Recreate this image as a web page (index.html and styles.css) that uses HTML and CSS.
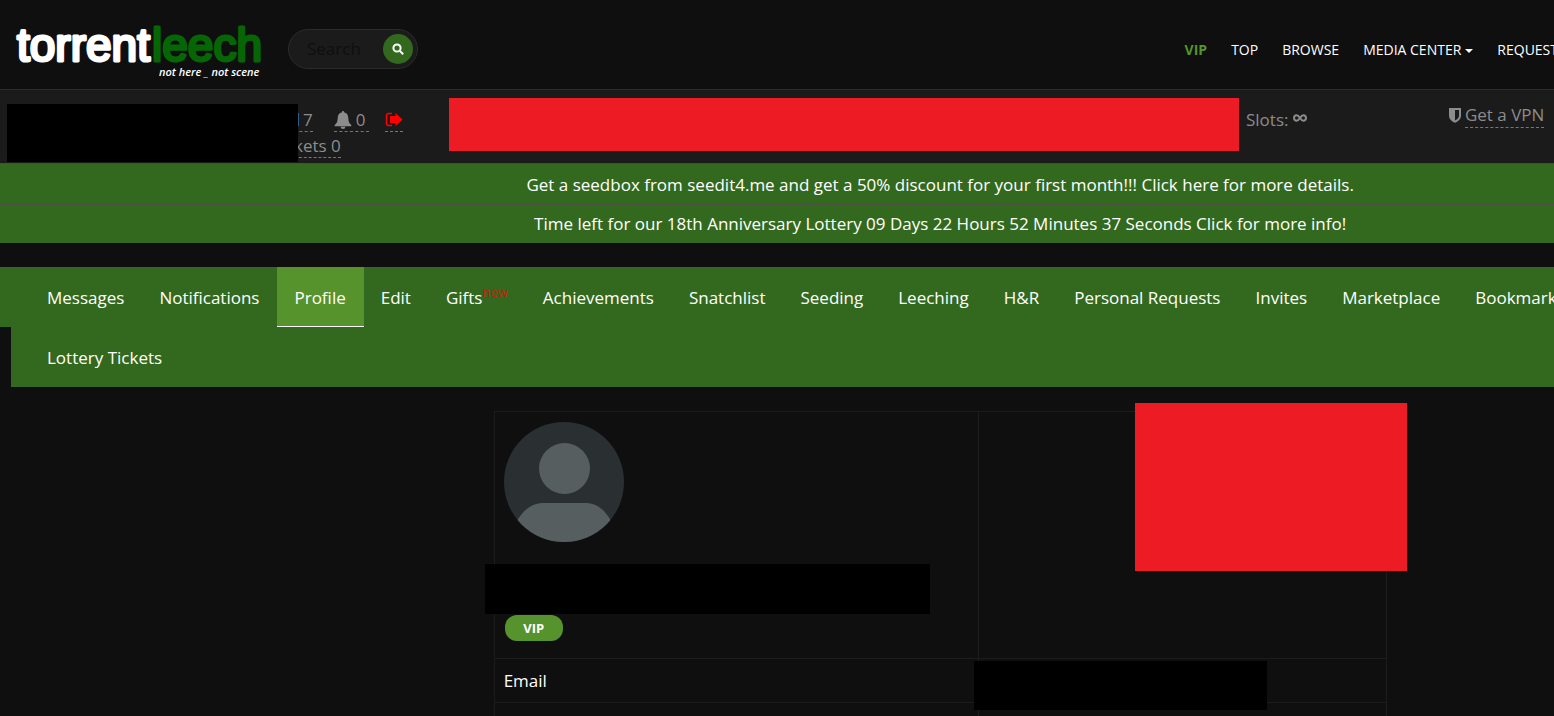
FILE: index.html
```html
<!DOCTYPE html>
<html lang="en">
<head>
    <meta charset="UTF-8">
    <meta name="viewport" content="width=device-width, initial-scale=1.0">
    <title>TorrentLeech - Profile</title>
    <link rel="stylesheet" href="styles.css">
</head>
<body>
    <div class="page">
        <header class="header">
            <div class="header-left">
                <a class="logo" href="#" aria-label="torrentleech">
                    <svg width="252" height="64" viewBox="0 0 252 64">
                        <g class="logo-name">
                            <text class="logo-white" x="3" y="44">torrent</text>
                            <text class="logo-green" x="138" y="44">leech</text>
                        </g>
                        <text class="logo-tagline" x="145" y="59">not here _ not scene</text>
                    </svg>
                </a>
                <form class="search">
                    <input type="text" placeholder="Search" aria-label="Search">
                    <button type="button" aria-label="Search">
                        <svg width="12" height="12" viewBox="0 0 12 12" fill="none" stroke="#fff" stroke-width="2">
                            <circle cx="5" cy="5" r="3.6"/>
                            <path d="M7.6 7.6 11.2 11.2"/>
                        </svg>
                    </button>
                </form>
            </div>
            <nav class="main-nav">
                <a class="vip" href="#">VIP</a>
                <a href="#">TOP</a>
                <a href="#">BROWSE</a>
                <a href="#">MEDIA CENTER<span class="caret"></span></a>
                <a href="#">REQUESTS</a>
            </nav>
        </header>

        <section class="user-bar">
            <div class="user-info">
                <div class="mask mask-user"></div>
                <div class="user-links">
                    <div class="user-row">
                        <a class="inbox" href="#"><span class="inbox-icon"></span>7</a>
                        <a class="bell" href="#">
                            <svg width="18" height="18" viewBox="0 0 18 18" fill="currentColor">
                                <path d="M9 0C8.300 0 7.900.5 8 1.300 5 1.900 3.800 4.300 3.700 7 3.600 10.800 2.600 12.600.7 14v1.300h16.600V14c-1.900-1.400-2.900-3.200-3-7C14.200 4.300 13 1.900 10 1.300 10.100.5 9.700 0 9 0zM6.600 15.800a2.400 2.200 0 0 0 4.800 0z"/>
                            </svg>0</a>
                        <a class="logout" href="#" aria-label="Logout">
                            <svg width="18" height="16" viewBox="0 0 18 16">
                                <path d="M7 1.500H3.500a2 2 0 0 0-2 2v8a2 2 0 0 0 2 2H7" fill="none" stroke="#f00" stroke-width="1.500"/>
                                <path d="M10.500 1 17.500 7.500 10.500 14V11H5V4h5.500z" fill="#f00"/>
                            </svg>
                        </a>
                    </div>
                    <div class="user-row">
                        <a href="#">kets 0</a>
                    </div>
                </div>
            </div>
            <div class="mask mask-stats"></div>
            <div class="slots">Slots:
                <svg width="14" height="8" viewBox="0 0 14 8" fill="none" stroke="currentColor" stroke-width="2">
                    <path d="M7 4C5.800 2.200 4.800 1.200 3.600 1.200a2.600 2.800 0 0 0 0 5.600C4.800 6.800 5.800 5.800 7 4S9.200 1.200 10.400 1.200a2.600 2.800 0 0 1 0 5.600C9.200 6.800 8.200 5.800 7 4z"/>
                </svg>
            </div>
            <div class="vpn">
                <svg width="12" height="15" viewBox="0 0 12 15" fill="currentColor" fill-rule="evenodd">
                    <path d="M0 0h12v7.500c0 3.500-2.500 5.700-6 7.300C2.500 13.200 0 11 0 7.500zM6 2v10.600c2.400-1.300 4-2.800 4-5.100V2z"/>
                </svg>
                <a href="#">Get a VPN</a>
            </div>
        </section>

        <a class="banner" href="#">Get a seedbox from seedit4.me and get a 50% discount for your first month!!! Click here for more details.</a>
        <a class="banner" href="#">Time left for our 18th Anniversary Lottery 09 Days 22 Hours 52 Minutes 37 Seconds Click for more info!</a>

        <nav class="profile-nav">
            <div class="nav-row">
                <a href="#">Messages</a>
                <a href="#">Notifications</a>
                <a class="active" href="#">Profile</a>
                <a href="#">Edit</a>
                <a href="#">Gifts<sup>new</sup></a>
                <a href="#">Achievements</a>
                <a href="#">Snatchlist</a>
                <a href="#">Seeding</a>
                <a href="#">Leeching</a>
                <a href="#">H&amp;R</a>
                <a href="#">Personal Requests</a>
                <a href="#">Invites</a>
                <a href="#">Marketplace</a>
                <a href="#">Bookmarks</a>
            </div>
            <div class="nav-row nav-row-second">
                <a href="#">Lottery Tickets</a>
            </div>
        </nav>

        <main>
            <table class="profile-table">
                <tr class="profile-top">
                    <td class="label-col">
                        <svg class="avatar" width="120" height="120" viewBox="0 0 120 120">
                            <clipPath id="round"><circle cx="60" cy="60" r="60"/></clipPath>
                            <g clip-path="url(#round)">
                                <rect width="120" height="120" fill="#2a3032"/>
                                <circle cx="60.500" cy="46.500" r="25.500" fill="#575e60"/>
                                <path d="M40 81h41c12 0 20 7 26 18v21H13V99c6-11 15-18 27-18z" fill="#575e60"/>
                            </g>
                        </svg>
                        <div class="mask mask-name"></div>
                        <span class="badge">VIP</span>
                    </td>
                    <td><div class="mask mask-card"></div></td>
                </tr>
                <tr>
                    <td>Email</td>
                    <td><div class="mask mask-email"></div></td>
                </tr>
                <tr>
                    <td></td>
                    <td></td>
                </tr>
            </table>
        </main>
    </div>
</body>
</html>
```

FILE: styles.css
```css
* {
    margin: 0;
    padding: 0;
    box-sizing: border-box;
}

body {
    height: 100vh;
    overflow: hidden;
    background-color: #0f0f0f;
    color: #fff;
    font-family: "Open Sans", "Noto Sans", sans-serif;
    font-size: 17px;
    line-height: 24px;
}

a {
    color: inherit;
    text-decoration: none;
}

/* the layout is wider than the window and runs off to the right */
.page {
    width: 121%;
}

/* Header */
.header {
    display: flex;
    align-items: center;
    height: 90px;
    padding-top: 8px;
    border-bottom: 1px solid #2b2b2b;
}

.header-left {
    display: flex;
    align-items: center;
    gap: 22px;
    width: 63%;
    padding-left: 14px;
}

.logo svg {
    display: block;
}

.logo-name {
    font-family: "Liberation Sans", Arial, sans-serif;
    font-size: 46px;
    stroke-width: 3;
    stroke-linejoin: round;
}

.logo-white {
    fill: #fff;
    stroke: #fff;
}

.logo-green {
    fill: #066606;
    stroke: #066606;
}

.logo-tagline {
    fill: #fff;
    font-size: 11px;
    font-style: italic;
    font-weight: 600;
}

.search {
    display: flex;
    align-items: center;
    width: 130px;
    height: 40px;
    padding: 0 4px 0 18px;
    background-color: #1b1b1b;
    border: 1px solid #2b2b2b;
    border-radius: 20px;
}

.search input {
    flex: 1;
    min-width: 0;
    background: none;
    border: none;
    outline: none;
    color: #0f0f0f;
    font-family: inherit;
    font-size: 17px;
}

.search input::placeholder {
    color: #0f0f0f;
}

.search button {
    display: flex;
    align-items: center;
    justify-content: center;
    width: 30px;
    height: 30px;
    background-color: #33691e;
    border: none;
    border-radius: 50%;
}

.main-nav {
    display: flex;
    gap: 24px;
    padding-top: 2px;
    font-size: 14px;
    white-space: nowrap;
}

.main-nav .vip {
    color: #56932c;
    font-weight: bold;
}

.caret {
    display: inline-block;
    margin-left: 4px;
    vertical-align: middle;
    border-top: 4px solid #fff;
    border-left: 4px solid transparent;
    border-right: 4px solid transparent;
}

/* User bar */
.user-bar {
    display: flex;
    height: 74px;
    padding: 8px 0 0 7px;
    background-color: #1b1b1b;
    border-bottom: 1px solid #4a4a4a;
    color: #8c8c8c;
}

.user-info {
    display: flex;
    width: 442px;
    padding-top: 6px;
}

.user-row {
    display: flex;
    gap: 16px;
    height: 26px;
    padding-top: 4px;
}

.user-row a {
    display: flex;
    align-items: center;
    height: 24px;
    border-bottom: 1px dashed #777;
}

.inbox-icon {
    width: 5px;
    height: 13px;
    margin-right: 4px;
    background-color: #2f5f86;
}

.user-row .bell {
    margin-left: 5px;
    padding-right: 4px;
}

.bell svg {
    margin-right: 4px;
}

.mask {
    background-color: #000;
}

.mask-user {
    position: relative;
    z-index: 1;
    width: 291px;
    height: 58px;
    margin-right: -4px;
}

.mask-stats {
    width: 790px;
    height: 53px;
    background-color: #ed1c24;
}

.slots {
    margin-left: 7px;
    padding-top: 10px;
}

.slots svg {
    margin-bottom: 4px;
}

.vpn {
    display: flex;
    align-items: flex-start;
    gap: 4px;
    margin-left: 142px;
    padding-top: 5px;
}

.vpn svg {
    margin-top: 5px;
}

.vpn a {
    border-bottom: 1px dashed #777;
}

/* Announcements */
.banner {
    display: block;
    padding: 9px 0 8px;
    background-color: #33691e;
    text-align: center;
    line-height: 23px;
}

.banner + .banner {
    padding-top: 7px;
    border-top: 1px solid #4a5343;
}

/* Profile tabs */
.profile-nav {
    margin-top: 24px;
}

.nav-row {
    display: flex;
    padding-left: 30px;
    background-color: #33691e;
}

.nav-row-second {
    margin-left: 11px;
    padding-left: 19px;
}

.nav-row a {
    height: 60px;
    padding: 0 18px 0 17px;
    line-height: 61px;
    white-space: nowrap;
}

.nav-row .active {
    background-color: #56932c;
    border-bottom: 1px solid #fff;
}

.nav-row sup {
    color: #c81e0a;
    font-size: 13px;
    line-height: 0;
}

/* Profile details */
.profile-table {
    width: 893px;
    margin: 24px auto 0;
    border-collapse: collapse;
    table-layout: fixed;
}

.profile-table td {
    position: relative;
    height: 44px;
    padding: 0 9px;
    border: 1px solid #1c1c1c;
}

.profile-table .label-col {
    width: 484px;
}

.profile-table .profile-top td {
    height: 247px;
    padding-top: 10px;
    vertical-align: top;
}

.avatar {
    display: block;
    margin-bottom: 22px;
}

.mask-name {
    width: 445px;
    height: 50px;
    margin: 0 0 1px -19px;
}

.badge {
    display: block;
    width: 58px;
    margin-left: 1px;
    background-color: #56932c;
    border-radius: 12px;
    font-size: 13px;
    font-weight: bold;
    line-height: 26px;
    text-align: center;
}

.mask-card {
    position: absolute;
    top: -9px;
    left: 156px;
    width: 272px;
    height: 168px;
    background-color: #ed1c24;
}

.mask-email {
    position: absolute;
    z-index: 1;
    top: 2px;
    left: -5px;
    width: 293px;
    height: 49px;
}
```
